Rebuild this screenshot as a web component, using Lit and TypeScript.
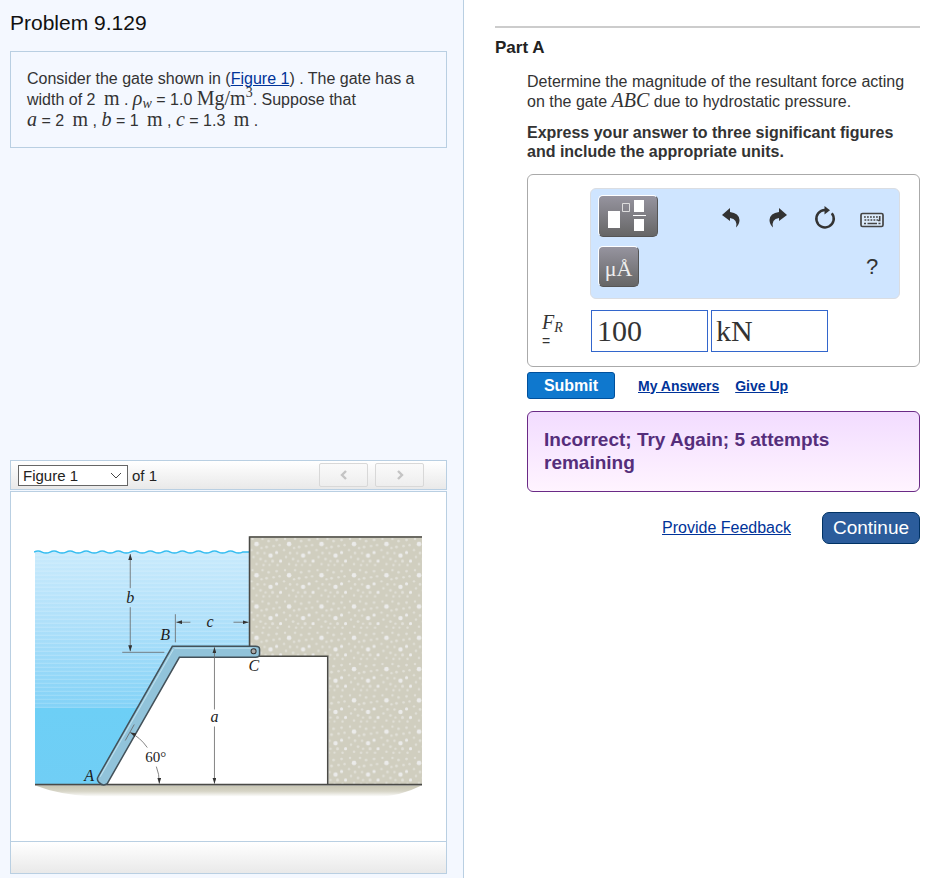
import { LitElement, html, css, svg } from "lit";
import { customElement } from "lit/decorators.js";

const speckles: [number, number, number][] = [
  [7, 8, 2.3], [21, 19.5, 2.2], [27, 16.5, 1.6], [23, 25, 1.5], [31, 25, 1.6], [15, 17, 1.2], [3, 3, 1.2],
  [13, 3, 1.2], [19, 5, 1.3], [27, 4, 1.4], [30, 9, 1.2], [24, 10, 1.3], [17, 11, 1.4], [12, 12, 1.2],
  [2, 14, 1.2], [8, 17, 1.3], [4, 21, 1.2], [11, 23, 1.4], [16, 25, 1.2], [7, 28, 1.2], [14, 29, 1.2],
  [20, 29, 1.1], [28, 29, 1.2],
];

@customElement("gate-figure")
export class GateFigure extends LitElement {
  static styles = css`
    :host { display: block; }
    svg { display: block; width: 100%; height: auto; }
    text { font-family: "Liberation Serif", serif; font-size: 16px; fill: #1c1c1c; stroke: none; }
    .i { font-style: italic; }
    .deg { font-size: 15px; }
  `;
  render() {
    const wave = "M0 22" + Array.from({ length: 13 }, () => "q4 -2 8 0t8 0").join("") + "L215 22";
    return html`<svg viewBox="0 0 388 270" role="img" aria-label="Gate ABC holding back water">
      <defs>
        <linearGradient id="water" x1="0" y1="0" x2="0" y2="1">
          <stop offset="0" stop-color="#c9eafc" /><stop offset="0.3" stop-color="#afe0fa" />
          <stop offset="0.67" stop-color="#83d2f7" /><stop offset="0.67" stop-color="#6dcff6" />
          <stop offset="1" stop-color="#70cef5" />
        </linearGradient>
        <linearGradient id="ground" x1="0" y1="0" x2="0" y2="1">
          <stop offset="0" stop-color="#c8c6b4" /><stop offset="0.5" stop-color="#d6d4c6" /><stop offset="1" stop-color="#fff" />
        </linearGradient>
        <pattern id="bands" width="10" height="4" patternUnits="userSpaceOnUse">
          <path d="M0 1H10" stroke="#fff" stroke-opacity="0.2" />
        </pattern>
        <pattern id="stone" x="215" y="6" width="32.4" height="31.2" patternUnits="userSpaceOnUse">
          <rect width="33" height="32" fill="#d0cebf" />
          ${speckles.map(([x, y, r]) => svg`<circle cx=${x} cy=${y} r=${r} fill=${r > 1.5 ? "#ebebea" : "#e1e0d8"} />`)}
        </pattern>
        <marker id="arrow" viewBox="0 0 6 4" markerWidth="6" markerHeight="4" refX="6" refY="2" orient="auto-start-reverse" markerUnits="userSpaceOnUse">
          <path d="M0 0L6 2L0 4Z" fill="#333" />
        </marker>
      </defs>
      <path d="M2 255H386Q366 265 344 266H60Q25 264 2 255Z" fill="url(#ground)" />
      <path d="M1 22H215V117H140L64 254H1Z" fill="url(#water)" />
      <path d="M1 22H215V117H140L100 179H1Z" fill="url(#bands)" />
      <path d=${wave} fill="none" stroke="#35bdf0" stroke-width="1.5" />
      <path d="M215 6H387V254H294V126H215Z" fill="url(#stone)" />
      <path d="M387 7H215V117M224 126H293V254M1 254H387" fill="none" stroke="#4a4a46" stroke-width="1.6" />
      <path d="M138 116H221Q225 116 225 119V124Q225 127 221 127H145L73 253Q69 256 65 252Q62 249 64 246Z" fill="#91c3da" stroke="#435159" stroke-width="1.5" />
      <path d="M140 118H219M139 119L66 246" stroke="#bde0ee" stroke-width="1" />
      <circle cx="219" cy="121" r="2.5" fill="#aaa" stroke="#333" />
      <g stroke="#666" stroke-width="0.8" fill="none">
        <path d="M96 58V24" marker-end="url(#arrow)" /><path d="M96 77V121" marker-end="url(#arrow)" />
        <path d="M88 122H130M141 84V112" />
        <path d="M156 92H142" marker-end="url(#arrow)" /><path d="M199 92H214" marker-end="url(#arrow)" />
        <path d="M180 179V117" marker-end="url(#arrow)" /><path d="M180 196V253" marker-end="url(#arrow)" />
        <path d="M100 194L91 210" />
        <path d="M113 217Q106 207 96 202" marker-end="url(#arrow)" /><path d="M122 236Q125 243 125 253" marker-end="url(#arrow)" />
      </g>
      <text class="i" x="92" y="73">b</text><text class="i" x="172" y="97">c</text>
      <text class="i" x="126" y="110">B</text><text class="i" x="214" y="141">C</text>
      <text class="i" x="176" y="192">a</text><text class="i" x="50" y="250">A</text>
      <text class="deg" x="111" y="231">60°</text>
    </svg>`;
  }
}

@customElement("app-root")
export class AppRoot extends LitElement {
  static styles = css`
    :host { display: block; font-family: "Liberation Sans", Arial, sans-serif; font-size: 16px; color: #333; }
    * { box-sizing: border-box; }
    a { color: #039; }
    p, h1, h2 { margin: 0; font-weight: 400; }
    .page { display: grid; grid-template-columns: minmax(0, 464fr) minmax(0, 476fr); min-height: 100vh; background: #fff; }
    .left { display: flex; flex-direction: column; padding: 8px 16px 4px 10px; background: #f4f8ff; border-right: 1px solid #b9cfe2; }
    h1 { font-size: 21px; line-height: 29px; color: #111; }
    .statement { margin-top: 14px; padding: 16px; min-height: 97px; border: 1px solid #b9cfe2; line-height: 21px; }
    .m { font-family: "Liberation Serif", serif; font-size: 20px; line-height: 16px; }
    .v { font-family: "Liberation Serif", serif; font-size: 20px; line-height: 16px; font-style: italic; }
    .u { margin-left: 4px; }
    .m sup, .v sub { font-size: 14px; line-height: 0; }
    .v sub { vertical-align: -3px; }
    .nw { white-space: nowrap; }
    .figure { margin-top: auto; }
    .bar { display: flex; align-items: center; height: 30px; padding: 0 22px 0 7px; border: 1px solid #b9cfe2; background: linear-gradient(#fff, #e9e9e9); }
    .pick { position: relative; display: flex; margin-right: 4px; }
    select { appearance: none; width: 110px; height: 21px; padding: 0 4px; border: 1px solid #666; border-radius: 0; background: #fff; font: 15px "Liberation Sans", sans-serif; color: #222; }
    .pick svg { position: absolute; right: 5px; top: 5px; pointer-events: none; }
    .of { font-size: 15px; color: #222; flex: 1; }
    .nav { display: grid; place-items: center; width: 49px; height: 24px; padding: 0; margin-left: 7px; border: 1px solid #d8d8d8; border-radius: 2px; background: linear-gradient(#fafafa, #eee); }
    .canvas { margin-top: 1px; padding: 38px 23px 40px; border: 1px solid #b9cfe2; background: #fff; }
    .foot { height: 33px; margin-top: -1px; border: 1px solid #b9cfe2; background: linear-gradient(#fff, #e9e9e9); }
    .right { padding: 26px 20px 20px 31px; }
    .rule { border: 0; height: 2px; margin: 0; background: #ccc; }
    h2 { margin-top: 10px; font-size: 17px; line-height: 20px; font-weight: 700; color: #222; }
    .body { margin-left: 32px; }
    .ask { margin-top: 14px; line-height: 20px; }
    .note { margin-top: 11px; line-height: 19px; font-weight: 700; }
    .answer { margin-top: 13px; padding: 13px 19px 14px 13px; border: 1px solid #aaa; border-radius: 6px; }
    .tools { display: flex; justify-content: space-between; margin-left: 49px; height: 111px; padding: 6px 11px 0 7px; border: 1px solid #dadde2; border-radius: 6px; background: #cfe5ff; }
    button { cursor: pointer; font-family: inherit; }
    .pads { display: flex; flex-direction: column; align-items: flex-start; gap: 9px; }
    .pad { display: grid; place-items: center; width: 60px; height: 42px; padding: 0; border: 1px solid #fff; border-right-color: #555; border-bottom-color: #555; border-radius: 5px; background: linear-gradient(#96949f, #666); }
    .pad.small { width: 41px; height: 41px; padding-top: 4px; color: #eee; font: 22px "Liberation Serif", serif; }
    .acts { display: grid; grid-template-columns: repeat(4, 32px); column-gap: 15px; grid-template-rows: 46px 52px; place-items: center; }
    .acts button { display: grid; place-items: center; width: 32px; height: 30px; padding: 0; border: 0; background: none; }
    .acts .keys { padding-top: 4px; }
    .acts .help { grid-column: 4; font-size: 22px; color: #333; }
    .entry { display: flex; gap: 3px; margin-top: 11px; }
    .lab { width: 47px; padding-left: 1px; }
    .lab .v { display: block; line-height: 24px; }
    .eq { display: block; font-size: 14px; line-height: 14px; }
    .entry input { width: 117px; height: 42px; padding: 0 5px; border: 1px solid #36c; border-radius: 0; font: 30px "Liberation Serif", serif; color: #333; }
    .entry .unit { padding: 0 4px; }
    .row { display: flex; align-items: center; margin-top: 5px; font-size: 14px; font-weight: 700; }
    .submit { width: 88px; height: 27px; margin-right: 23px; padding: 0; border: 1px solid #00509c; border-radius: 3px; background: #0f78ce; color: #fff; font-size: 16px; font-weight: 700; }
    .row a { margin-right: 16px; }
    .alert { margin-top: 12px; padding: 16px; min-height: 81px; border: 1px solid #6a2a86; border-radius: 6px; background: linear-gradient(#f2dcff, #fff4ff); font-size: 19px; line-height: 23px; font-weight: 700; color: #552e7b; }
    .end { display: flex; justify-content: flex-end; align-items: center; gap: 31px; margin-top: 20px; }
    .go { width: 98px; height: 32px; padding: 0; border: 1px solid #003264; border-radius: 7px; background: #2b5c9b; color: #fff; font-size: 19px; }
  `;
  render() {
    return html`<div class="page">
      <section class="left">
        <h1>Problem 9.129</h1>
        <p class="statement">Consider the gate shown in (<a href="#figure">Figure 1</a>) . The gate has a width of <span class="nw">2 <span class="m u">m</span> .</span> <span class="nw"><span class="v">ρ<sub>w</sub></span> = 1.0</span> <span class="m">Mg/m<sup>3</sup></span>. Suppose that <span class="nw"><span class="v">a</span> = 2 <span class="m u">m</span> ,</span> <span class="nw"><span class="v">b</span> = 1 <span class="m u">m</span> ,</span> <span class="nw"><span class="v">c</span> = 1.3 <span class="m u">m</span> .</span></p>
        <div class="figure" id="figure">
          <div class="bar">
            <span class="pick"><select aria-label="Figure"><option>Figure 1</option></select>
              <svg width="14" height="12" viewBox="0 0 14 12"><path d="M2 3L7 8L12 3" fill="none" stroke="#444" /></svg></span>
            <span class="of">of 1</span>
            <button class="nav" aria-label="Previous figure"><svg width="10" height="12" viewBox="0 0 10 12"><path d="M7 2L3 6L7 10" fill="none" stroke="#c4c4c4" stroke-width="2.4" /></svg></button>
            <button class="nav" aria-label="Next figure"><svg width="10" height="12" viewBox="0 0 10 12"><path d="M3 2L7 6L3 10" fill="none" stroke="#c4c4c4" stroke-width="2.4" /></svg></button>
          </div>
          <div class="canvas"><gate-figure></gate-figure></div>
          <div class="foot"></div>
        </div>
      </section>
      <main class="right">
        <hr class="rule" />
        <h2>Part A</h2>
        <div class="body">
          <p class="ask">Determine the magnitude of the resultant force acting on the gate <span class="v">ABC</span> due to hydrostatic pressure.</p>
          <p class="note">Express your answer to three significant figures and include the appropriate units.</p>
          <div class="answer">
            <div class="tools">
              <div class="pads">
                <button class="pad" aria-label="Templates"><svg width="42" height="34" viewBox="0 0 42 34"><path d="M1 12H13V29H1Z" fill="#fff" /><path d="M15.500 4.500H22.500V12.500H15.500Z" fill="none" stroke="#ddd" /><path d="M27 1H37V13H27ZM26 16H39V17H26ZM27 20H37V32H27Z" fill="#fff" /></svg></button>
                <button class="pad small" aria-label="Units">μÅ</button>
              </div>
              <div class="acts">
                <button aria-label="Undo"><svg width="18" height="20" viewBox="0 0 18 20"><path d="M0 7L8 0V4Q17 5 17.500 12Q17.500 16 14 19.500Q16 11 8 10V13Z" fill="#333" /></svg></button>
                <button aria-label="Redo"><svg width="18" height="20" viewBox="0 0 18 20"><path d="M18 7L10 0V4Q1 5 .5 12Q.5 16 4 19.500Q2 11 10 10V13Z" fill="#333" /></svg></button>
                <button aria-label="Reset"><svg width="22" height="24" viewBox="0 0 22 24"><path d="M17.800 7.200A8.700 8.700 0 1 1 11 4" fill="none" stroke="#333" stroke-width="2.500" /><path d="M10.500 0L16 4.200L10.500 8.500Z" fill="#333" /></svg></button>
                <button class="keys" aria-label="Keyboard"><svg width="24" height="16" viewBox="0 0 24 16"><rect x="1" y="1.500" width="22" height="13" rx="1.500" fill="#dcebfb" stroke="#444" stroke-width="1.700" /><path d="M4 5H18M4.500 8H18" stroke="#444" stroke-width="1.700" stroke-dasharray="1.800 1.200" /><path d="M19.700 4V8.500H18M4 11.500H6M7.500 11.500H17M18.500 11.500H20.500" fill="none" stroke="#444" stroke-width="1.600" /></svg></button>
                <button class="help" aria-label="Help">?</button>
              </div>
            </div>
            <div class="entry">
              <label class="lab" for="value"><span class="v">F<sub>R</sub></span><span class="eq">=</span></label>
              <input id="value" value="100" /><input class="unit" aria-label="Units" value="kN" />
            </div>
          </div>
          <div class="row"><button class="submit">Submit</button><a href="#answers">My Answers</a><a href="#giveup">Give Up</a></div>
          <div class="alert" role="status">Incorrect; Try Again; 5 attempts remaining</div>
          <div class="end"><a href="#feedback">Provide Feedback</a><button class="go">Continue</button></div>
        </div>
      </main>
    </div>`;
  }
}
